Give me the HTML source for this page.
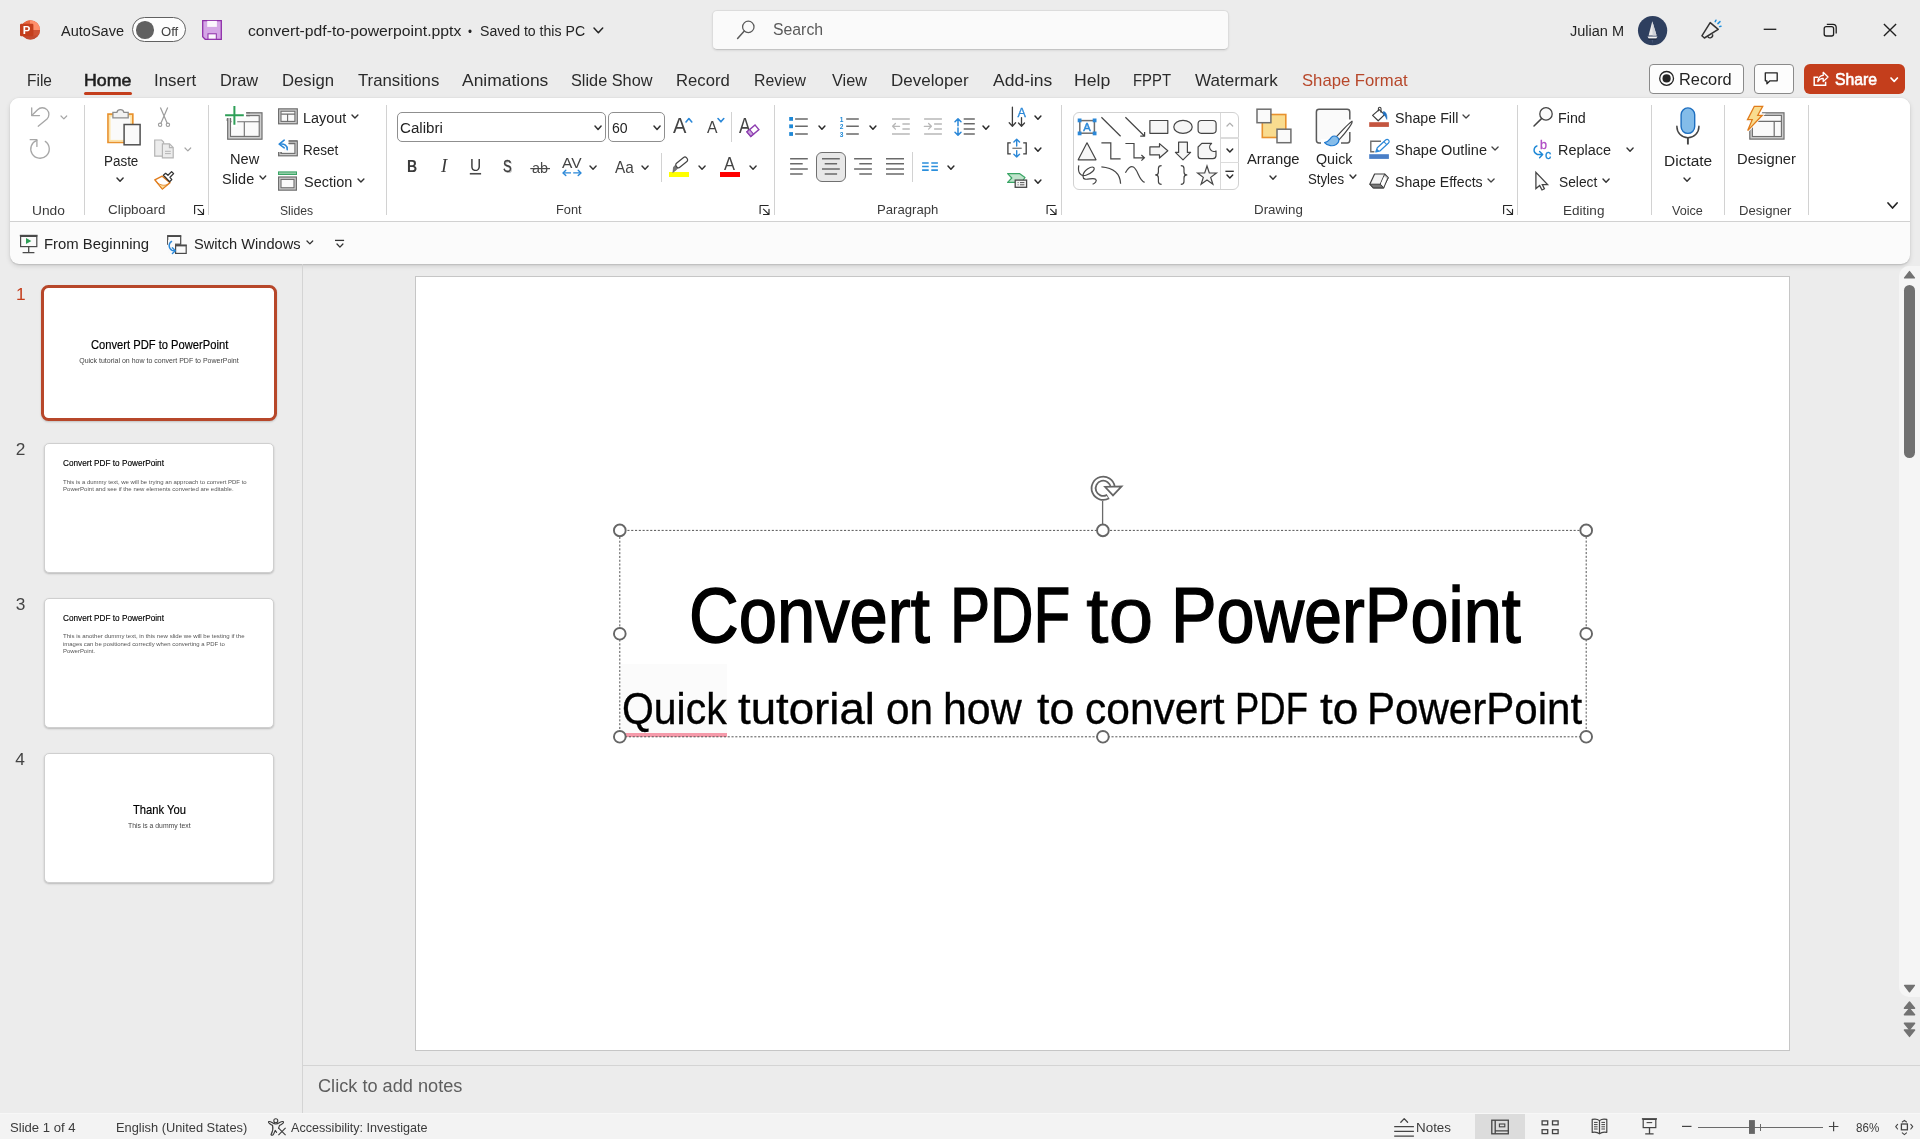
<!DOCTYPE html><html lang="en"><head><meta charset="utf-8"><title>convert-pdf-to-powerpoint.pptx - PowerPoint</title>
<style>html,body{margin:0;padding:0}body{width:1920px;height:1139px;overflow:hidden;position:relative;background:#ececec;font-family:"Liberation Sans", sans-serif}svg{display:block}span{transform-origin:0 50%}#app{position:absolute;left:0;top:0;width:1920px;height:1139px;will-change:transform}</style></head><body><div id="app">
<span style="position:absolute;left:61.30px;top:22.00px;font-size:15.5px;line-height:17px;white-space:pre;color:#242424;transform:scaleX(0.9370);transform-origin:0 50%;">AutoSave</span>
<div style="position:absolute;left:132px;top:17px;width:54px;height:25px;box-sizing:border-box;border:1px solid #616161;border-radius:13px;background:#fdfdfd"></div>
<div style="position:absolute;left:136.2px;top:21.2px;width:17.6px;height:17.6px;border-radius:50%;background:#616161"></div>
<span style="position:absolute;left:160.50px;top:24.00px;font-size:13.5px;line-height:15px;white-space:pre;color:#424242;transform:scaleX(0.9718);transform-origin:0 50%;">Off</span>
<span style="position:absolute;left:247.50px;top:22.00px;font-size:15.5px;line-height:17px;white-space:pre;color:#242424;transform:scaleX(1.0144);transform-origin:0 50%;">convert-pdf-to-powerpoint.pptx</span>
<span style="position:absolute;left:467.60px;top:24.00px;font-size:13px;line-height:15px;white-space:pre;color:#242424;transform:scaleX(0.8800);transform-origin:0 50%;">•</span>
<span style="position:absolute;left:479.50px;top:22.00px;font-size:15.5px;line-height:17px;white-space:pre;color:#242424;transform:scaleX(0.9102);transform-origin:0 50%;">Saved to this PC</span>
<svg style="position:absolute;left:592.55px;top:27.05px;overflow:visible" width="10.7" height="6.7"><path d="M1 1 L5.35 5.70 L9.70 1" fill="none" stroke="#242424" stroke-width="1.5" stroke-linecap="round" stroke-linejoin="round"/></svg>
<div style="position:absolute;left:711.5px;top:10.4px;width:517px;height:39.8px;box-sizing:border-box;background:#fafafa;border:1px solid #dcdcdc;border-bottom-color:#c4c4c4;border-radius:5px;box-shadow:0 1px 2px rgba(0,0,0,.08)"></div>
<span style="position:absolute;left:772.50px;top:20.00px;font-size:16.7px;line-height:19px;white-space:pre;color:#5a5a5a;transform:scaleX(0.9469);transform-origin:0 50%;">Search</span>
<span style="position:absolute;left:1570.00px;top:22.00px;font-size:15.5px;line-height:17px;white-space:pre;color:#242424;transform:scaleX(0.9365);transform-origin:0 50%;">Julian M</span>
<span style="position:absolute;left:26.57px;top:71.00px;font-size:16.6px;line-height:19px;white-space:pre;color:#2b2b2b;transform:scaleX(0.9330);transform-origin:0 50%;">File</span>
<span style="position:absolute;left:83.93px;top:71.00px;font-size:16.6px;line-height:19px;white-space:pre;color:#1f1f1f;transform:scaleX(1.0689);transform-origin:0 50%;-webkit-text-stroke:0.55px #1f1f1f;">Home</span>
<span style="position:absolute;left:153.68px;top:71.00px;font-size:16.6px;line-height:19px;white-space:pre;color:#2b2b2b;transform:scaleX(1.0174);transform-origin:0 50%;">Insert</span>
<span style="position:absolute;left:219.81px;top:71.00px;font-size:16.6px;line-height:19px;white-space:pre;color:#2b2b2b;transform:scaleX(0.9861);transform-origin:0 50%;">Draw</span>
<span style="position:absolute;left:282.29px;top:71.00px;font-size:16.6px;line-height:19px;white-space:pre;color:#2b2b2b;transform:scaleX(1.0055);transform-origin:0 50%;">Design</span>
<span style="position:absolute;left:358.00px;top:71.00px;font-size:16.6px;line-height:19px;white-space:pre;color:#2b2b2b;transform:scaleX(1.0095);transform-origin:0 50%;">Transitions</span>
<span style="position:absolute;left:462.00px;top:71.00px;font-size:16.6px;line-height:19px;white-space:pre;color:#2b2b2b;transform:scaleX(1.0515);transform-origin:0 50%;">Animations</span>
<span style="position:absolute;left:571.00px;top:71.00px;font-size:16.6px;line-height:19px;white-space:pre;color:#2b2b2b;transform:scaleX(0.9817);transform-origin:0 50%;">Slide Show</span>
<span style="position:absolute;left:676.00px;top:71.00px;font-size:16.6px;line-height:19px;white-space:pre;color:#2b2b2b;transform:scaleX(1.0045);transform-origin:0 50%;">Record</span>
<span style="position:absolute;left:754.04px;top:71.00px;font-size:16.6px;line-height:19px;white-space:pre;color:#2b2b2b;transform:scaleX(0.9555);transform-origin:0 50%;">Review</span>
<span style="position:absolute;left:832.00px;top:71.00px;font-size:16.6px;line-height:19px;white-space:pre;color:#2b2b2b;transform:scaleX(0.9814);transform-origin:0 50%;">View</span>
<span style="position:absolute;left:890.97px;top:71.00px;font-size:16.6px;line-height:19px;white-space:pre;color:#2b2b2b;transform:scaleX(1.0252);transform-origin:0 50%;">Developer</span>
<span style="position:absolute;left:993.00px;top:71.00px;font-size:16.6px;line-height:19px;white-space:pre;color:#2b2b2b;transform:scaleX(1.0542);transform-origin:0 50%;">Add-ins</span>
<span style="position:absolute;left:1073.94px;top:71.00px;font-size:16.6px;line-height:19px;white-space:pre;color:#2b2b2b;transform:scaleX(1.0639);transform-origin:0 50%;">Help</span>
<span style="position:absolute;left:1133.10px;top:71.00px;font-size:16.6px;line-height:19px;white-space:pre;color:#2b2b2b;transform:scaleX(0.8965);transform-origin:0 50%;">FPPT</span>
<span style="position:absolute;left:1195.00px;top:71.00px;font-size:16.6px;line-height:19px;white-space:pre;color:#2b2b2b;transform:scaleX(1.0281);transform-origin:0 50%;">Watermark</span>
<span style="position:absolute;left:1302.00px;top:71.00px;font-size:16.6px;line-height:19px;white-space:pre;color:#b7472a;transform:scaleX(1.0044);transform-origin:0 50%;">Shape Format</span>
<div style="position:absolute;left:84px;top:92px;width:48px;height:3px;background:#c43e1c;border-radius:1.5px"></div>
<div style="position:absolute;left:1649px;top:64px;width:95px;height:30px;box-sizing:border-box;background:#fdfdfd;border:1px solid #8a8a8a;border-radius:4px"></div>
<span style="position:absolute;left:1678.73px;top:70.00px;font-size:16.8px;line-height:19px;white-space:pre;color:#242424;transform:scaleX(0.9742);transform-origin:0 50%;">Record</span>
<div style="position:absolute;left:1754px;top:64px;width:40px;height:30px;box-sizing:border-box;background:#fdfdfd;border:1px solid #8a8a8a;border-radius:4px"></div>
<div style="position:absolute;left:1804px;top:64px;width:101px;height:30px;background:#c43e1c;border-radius:6px"></div>
<span style="position:absolute;left:1834.70px;top:70.00px;font-size:16.8px;line-height:19px;white-space:pre;color:#ffffff;transform:scaleX(0.9404);transform-origin:0 50%;-webkit-text-stroke:0.6px #fff;">Share</span>
<div style="position:absolute;left:10px;top:97.5px;width:1900px;height:166px;background:#fbfbfb;border-radius:9px;box-shadow:0 2px 5px rgba(0,0,0,.13),0 0.5px 1.5px rgba(0,0,0,.13)"></div>
<div style="position:absolute;left:10px;top:97.5px;width:1900px;height:124px;background:#ffffff;border-radius:9px 9px 0 0"></div>
<div style="position:absolute;left:10px;top:221px;width:1900px;height:1px;background:#d1d1d1"></div>
<div style="position:absolute;left:84px;top:104.5px;width:1px;height:110px;background:#d2d2d2"></div>
<div style="position:absolute;left:208px;top:104.5px;width:1px;height:110px;background:#d2d2d2"></div>
<div style="position:absolute;left:386px;top:104.5px;width:1px;height:110px;background:#d2d2d2"></div>
<div style="position:absolute;left:774px;top:104.5px;width:1px;height:110px;background:#d2d2d2"></div>
<div style="position:absolute;left:1061px;top:104.5px;width:1px;height:110px;background:#d2d2d2"></div>
<div style="position:absolute;left:1517px;top:104.5px;width:1px;height:110px;background:#d2d2d2"></div>
<div style="position:absolute;left:1651px;top:104.5px;width:1px;height:110px;background:#d2d2d2"></div>
<div style="position:absolute;left:1724px;top:104.5px;width:1px;height:110px;background:#d2d2d2"></div>
<div style="position:absolute;left:1808px;top:104.5px;width:1px;height:110px;background:#d2d2d2"></div>
<span style="position:absolute;left:31.96px;top:203.00px;font-size:13.3px;line-height:15px;white-space:pre;color:#3b3b3b;transform:scaleX(1.0364);transform-origin:0 50%;">Undo</span>
<span style="position:absolute;left:107.50px;top:202.00px;font-size:13.3px;line-height:15px;white-space:pre;color:#3b3b3b;transform:scaleX(1.0085);transform-origin:0 50%;">Clipboard</span>
<span style="position:absolute;left:280.00px;top:203.00px;font-size:13.3px;line-height:15px;white-space:pre;color:#3b3b3b;transform:scaleX(0.9161);transform-origin:0 50%;">Slides</span>
<span style="position:absolute;left:556.04px;top:202.00px;font-size:13.3px;line-height:15px;white-space:pre;color:#3b3b3b;transform:scaleX(0.9648);transform-origin:0 50%;">Font</span>
<span style="position:absolute;left:876.51px;top:202.00px;font-size:13.3px;line-height:15px;white-space:pre;color:#3b3b3b;transform:scaleX(0.9885);transform-origin:0 50%;">Paragraph</span>
<span style="position:absolute;left:1254.00px;top:202.00px;font-size:13.3px;line-height:15px;white-space:pre;color:#3b3b3b;transform:scaleX(1.0026);transform-origin:0 50%;">Drawing</span>
<span style="position:absolute;left:1562.98px;top:203.00px;font-size:13.3px;line-height:15px;white-space:pre;color:#3b3b3b;transform:scaleX(1.0188);transform-origin:0 50%;">Editing</span>
<span style="position:absolute;left:1672.00px;top:203.00px;font-size:13.3px;line-height:15px;white-space:pre;color:#3b3b3b;transform:scaleX(0.9492);transform-origin:0 50%;">Voice</span>
<span style="position:absolute;left:1739.01px;top:203.00px;font-size:13.3px;line-height:15px;white-space:pre;color:#3b3b3b;transform:scaleX(0.9851);transform-origin:0 50%;">Designer</span>
<span style="position:absolute;left:103.72px;top:152.00px;font-size:15.3px;line-height:17px;white-space:pre;color:#242424;transform:scaleX(0.8775);transform-origin:0 50%;">Paste</span>
<svg style="position:absolute;left:116.35px;top:176.80px;overflow:visible" width="8.1" height="5.2"><path d="M1 1 L4.05 4.20 L7.10 1" fill="none" stroke="#333" stroke-width="1.5" stroke-linecap="round" stroke-linejoin="round"/></svg>
<span style="position:absolute;left:229.74px;top:150.00px;font-size:15.3px;line-height:17px;white-space:pre;color:#242424;transform:scaleX(0.9557);transform-origin:0 50%;">New</span>
<span style="position:absolute;left:221.70px;top:170.00px;font-size:15.3px;line-height:17px;white-space:pre;color:#242424;transform:scaleX(0.9461);transform-origin:0 50%;">Slide</span>
<svg style="position:absolute;left:258.75px;top:174.85px;overflow:visible" width="7.699999999999999" height="5.1"><path d="M1 1 L3.85 4.10 L6.70 1" fill="none" stroke="#333" stroke-width="1.4" stroke-linecap="round" stroke-linejoin="round"/></svg>
<span style="position:absolute;left:302.86px;top:109.00px;font-size:15.3px;line-height:17px;white-space:pre;color:#242424;transform:scaleX(0.9392);transform-origin:0 50%;">Layout</span>
<svg style="position:absolute;left:351.35px;top:114.30px;overflow:visible" width="7.8999999999999995" height="5.0"><path d="M1 1 L3.95 4.00 L6.90 1" fill="none" stroke="#333" stroke-width="1.4" stroke-linecap="round" stroke-linejoin="round"/></svg>
<span style="position:absolute;left:302.92px;top:141.00px;font-size:15.3px;line-height:17px;white-space:pre;color:#242424;transform:scaleX(0.8839);transform-origin:0 50%;">Reset</span>
<span style="position:absolute;left:303.50px;top:173.00px;font-size:15.3px;line-height:17px;white-space:pre;color:#242424;transform:scaleX(0.9463);transform-origin:0 50%;">Section</span>
<svg style="position:absolute;left:356.55px;top:178.05px;overflow:visible" width="7.8999999999999995" height="5.1"><path d="M1 1 L3.95 4.10 L6.90 1" fill="none" stroke="#333" stroke-width="1.4" stroke-linecap="round" stroke-linejoin="round"/></svg>
<div style="position:absolute;left:397px;top:112px;width:208.5px;height:30px;box-sizing:border-box;background:#fff;border:1px solid #8f8f8f;border-radius:5px"></div>
<span style="position:absolute;left:400.00px;top:119.00px;font-size:15.3px;line-height:17px;white-space:pre;color:#242424;transform:scaleX(0.9895);transform-origin:0 50%;">Calibri</span>
<svg style="position:absolute;left:594.25px;top:124.65px;overflow:visible" width="8.1" height="5.5"><path d="M1 1 L4.05 4.50 L7.10 1" fill="none" stroke="#333" stroke-width="1.5" stroke-linecap="round" stroke-linejoin="round"/></svg>
<div style="position:absolute;left:608px;top:112px;width:57px;height:30px;box-sizing:border-box;background:#fff;border:1px solid #8f8f8f;border-radius:5px"></div>
<span style="position:absolute;left:611.60px;top:119.00px;font-size:15.3px;line-height:17px;white-space:pre;color:#242424;transform:scaleX(0.9208);transform-origin:0 50%;">60</span>
<svg style="position:absolute;left:653.25px;top:124.65px;overflow:visible" width="8.1" height="5.5"><path d="M1 1 L4.05 4.50 L7.10 1" fill="none" stroke="#333" stroke-width="1.5" stroke-linecap="round" stroke-linejoin="round"/></svg>
<div style="position:absolute;left:731px;top:112px;width:1px;height:30px;background:#d2d2d2"></div>
<div style="position:absolute;left:661px;top:152.5px;width:1px;height:29px;background:#d2d2d2"></div>
<div style="position:absolute;left:912px;top:152px;width:1px;height:30px;background:#d2d2d2"></div>
<span style="position:absolute;left:406.98px;top:156.00px;font-size:17.2px;line-height:20px;white-space:pre;color:#3b3b3b;font-weight:700;transform:scaleX(0.8182);transform-origin:0 50%;">B</span>
<span style="position:absolute;left:440.79px;top:156.00px;font-size:18px;line-height:20px;white-space:pre;color:#3b3b3b;font-family:'Liberation Serif', serif;font-style:italic;transform:scaleX(1.0375);transform-origin:0 50%;">I</span>
<span style="position:absolute;left:469.97px;top:156.00px;font-size:16.6px;line-height:19px;white-space:pre;color:#3b3b3b;transform:scaleX(0.9300);transform-origin:0 50%;">U</span>
<span style="position:absolute;left:503.10px;top:156.00px;font-size:17.4px;line-height:20px;white-space:pre;color:#3b3b3b;transform:scaleX(0.7455);transform-origin:0 50%;text-shadow:1.3px 1.2px 0 #c4c4c4;-webkit-text-stroke:0.3px #3b3b3b;">S</span>
<span style="position:absolute;left:532.00px;top:159.00px;font-size:15.2px;line-height:17px;white-space:pre;color:#4a4a4a;transform:scaleX(0.9485);transform-origin:0 50%;">ab</span>
<span style="position:absolute;left:562.20px;top:155.00px;font-size:14.8px;line-height:16px;white-space:pre;color:#444;transform:scaleX(1.0495);transform-origin:0 50%;">AV</span>
<svg style="position:absolute;left:589.25px;top:164.95px;overflow:visible" width="8.1" height="5.3"><path d="M1 1 L4.05 4.30 L7.10 1" fill="none" stroke="#333" stroke-width="1.4" stroke-linecap="round" stroke-linejoin="round"/></svg>
<span style="position:absolute;left:614.50px;top:158.00px;font-size:16.6px;line-height:19px;white-space:pre;color:#444;transform:scaleX(0.9256);transform-origin:0 50%;">Aa</span>
<svg style="position:absolute;left:641.45px;top:165.10px;overflow:visible" width="8.1" height="5.2"><path d="M1 1 L4.05 4.20 L7.10 1" fill="none" stroke="#333" stroke-width="1.4" stroke-linecap="round" stroke-linejoin="round"/></svg>
<svg style="position:absolute;left:698.25px;top:165.05px;overflow:visible" width="8.1" height="5.3"><path d="M1 1 L4.05 4.30 L7.10 1" fill="none" stroke="#333" stroke-width="1.4" stroke-linecap="round" stroke-linejoin="round"/></svg>
<svg style="position:absolute;left:749.05px;top:165.05px;overflow:visible" width="8.1" height="5.3"><path d="M1 1 L4.05 4.30 L7.10 1" fill="none" stroke="#333" stroke-width="1.4" stroke-linecap="round" stroke-linejoin="round"/></svg>
<div style="position:absolute;left:669px;top:172px;width:20px;height:5px;background:#ffff00"></div>
<div style="position:absolute;left:720px;top:172px;width:20px;height:5px;background:#ff0000"></div>
<span style="position:absolute;left:724.30px;top:153.00px;font-size:18.3px;line-height:21px;white-space:pre;color:#444;transform:scaleX(0.9000);transform-origin:0 50%;">A</span>
<div style="position:absolute;left:816px;top:152px;width:30px;height:30px;box-sizing:border-box;background:#e8e8e8;border:1px solid #707070;border-radius:6px"></div>
<div style="position:absolute;left:1073px;top:112px;width:166px;height:78px;box-sizing:border-box;background:#fff;border:1px solid #d1d1d1;border-radius:6px"></div>
<div style="position:absolute;left:1220px;top:113px;width:1px;height:76px;background:#d9d9d9"></div>
<div style="position:absolute;left:1221px;top:137px;width:17.5px;height:1.5px;background:#dcdcdc"></div>
<div style="position:absolute;left:1221px;top:161.5px;width:17.5px;height:1.5px;background:#dcdcdc"></div>
<span style="position:absolute;left:1247.40px;top:150.00px;font-size:15.3px;line-height:17px;white-space:pre;color:#242424;transform:scaleX(0.9664);transform-origin:0 50%;">Arrange</span>
<svg style="position:absolute;left:1269.40px;top:174.70px;overflow:visible" width="8.0" height="5.2"><path d="M1 1 L4.00 4.20 L7.00 1" fill="none" stroke="#333" stroke-width="1.4" stroke-linecap="round" stroke-linejoin="round"/></svg>
<span style="position:absolute;left:1315.60px;top:150.00px;font-size:15.3px;line-height:17px;white-space:pre;color:#242424;transform:scaleX(0.9328);transform-origin:0 50%;">Quick</span>
<span style="position:absolute;left:1308.00px;top:170.00px;font-size:15.3px;line-height:17px;white-space:pre;color:#242424;transform:scaleX(0.8641);transform-origin:0 50%;">Styles</span>
<svg style="position:absolute;left:1349.45px;top:174.30px;overflow:visible" width="7.8999999999999995" height="5.2"><path d="M1 1 L3.95 4.20 L6.90 1" fill="none" stroke="#333" stroke-width="1.4" stroke-linecap="round" stroke-linejoin="round"/></svg>
<span style="position:absolute;left:1394.50px;top:109.00px;font-size:15.3px;line-height:17px;white-space:pre;color:#242424;transform:scaleX(0.9316);transform-origin:0 50%;">Shape Fill</span>
<svg style="position:absolute;left:1462.45px;top:114.00px;overflow:visible" width="8.1" height="5.0"><path d="M1 1 L4.05 4.00 L7.10 1" fill="none" stroke="#424242" stroke-width="1.3" stroke-linecap="round" stroke-linejoin="round"/></svg>
<span style="position:absolute;left:1394.50px;top:141.00px;font-size:15.3px;line-height:17px;white-space:pre;color:#242424;transform:scaleX(0.9488);transform-origin:0 50%;">Shape Outline</span>
<svg style="position:absolute;left:1491.45px;top:146.00px;overflow:visible" width="8.1" height="5.0"><path d="M1 1 L4.05 4.00 L7.10 1" fill="none" stroke="#424242" stroke-width="1.3" stroke-linecap="round" stroke-linejoin="round"/></svg>
<span style="position:absolute;left:1394.50px;top:173.00px;font-size:15.3px;line-height:17px;white-space:pre;color:#242424;transform:scaleX(0.9233);transform-origin:0 50%;">Shape Effects</span>
<svg style="position:absolute;left:1487.45px;top:178.00px;overflow:visible" width="8.1" height="5.0"><path d="M1 1 L4.05 4.00 L7.10 1" fill="none" stroke="#424242" stroke-width="1.3" stroke-linecap="round" stroke-linejoin="round"/></svg>
<span style="position:absolute;left:1557.87px;top:109.00px;font-size:15.3px;line-height:17px;white-space:pre;color:#242424;transform:scaleX(0.9345);transform-origin:0 50%;">Find</span>
<span style="position:absolute;left:1557.86px;top:141.00px;font-size:15.3px;line-height:17px;white-space:pre;color:#242424;transform:scaleX(0.9429);transform-origin:0 50%;">Replace</span>
<svg style="position:absolute;left:1626.45px;top:146.90px;overflow:visible" width="8.1" height="5.2"><path d="M1 1 L4.05 4.20 L7.10 1" fill="none" stroke="#333" stroke-width="1.4" stroke-linecap="round" stroke-linejoin="round"/></svg>
<span style="position:absolute;left:1558.80px;top:173.00px;font-size:15.3px;line-height:17px;white-space:pre;color:#242424;transform:scaleX(0.8991);transform-origin:0 50%;">Select</span>
<svg style="position:absolute;left:1602.35px;top:177.80px;overflow:visible" width="8.1" height="5.2"><path d="M1 1 L4.05 4.20 L7.10 1" fill="none" stroke="#333" stroke-width="1.4" stroke-linecap="round" stroke-linejoin="round"/></svg>
<span style="position:absolute;left:1663.99px;top:152.00px;font-size:15.3px;line-height:17px;white-space:pre;color:#242424;transform:scaleX(1.0130);transform-origin:0 50%;">Dictate</span>
<svg style="position:absolute;left:1683.35px;top:176.75px;overflow:visible" width="8.1" height="5.3"><path d="M1 1 L4.05 4.30 L7.10 1" fill="none" stroke="#333" stroke-width="1.4" stroke-linecap="round" stroke-linejoin="round"/></svg>
<span style="position:absolute;left:1736.94px;top:150.00px;font-size:15.3px;line-height:17px;white-space:pre;color:#242424;transform:scaleX(0.9630);transform-origin:0 50%;">Designer</span>
<svg style="position:absolute;left:1886.95px;top:201.80px;overflow:visible" width="11.1" height="7.0"><path d="M1 1 L5.55 6.00 L10.10 1" fill="none" stroke="#242424" stroke-width="1.7" stroke-linecap="round" stroke-linejoin="round"/></svg>
<span style="position:absolute;left:43.63px;top:235.00px;font-size:15.3px;line-height:17px;white-space:pre;color:#242424;transform:scaleX(0.9730);transform-origin:0 50%;">From Beginning</span>
<span style="position:absolute;left:193.70px;top:235.00px;font-size:15.3px;line-height:17px;white-space:pre;color:#242424;transform:scaleX(0.9578);transform-origin:0 50%;">Switch Windows</span>
<svg style="position:absolute;left:305.55px;top:239.95px;overflow:visible" width="7.699999999999999" height="4.9"><path d="M1 1 L3.85 3.90 L6.70 1" fill="none" stroke="#333" stroke-width="1.3" stroke-linecap="round" stroke-linejoin="round"/></svg>
<div style="position:absolute;left:302px;top:264px;width:1px;height:849px;background:#d4d4d4"></div>
<span style="position:absolute;left:16.00px;top:284.00px;font-size:17.3px;line-height:20px;white-space:pre;color:#c43e1c;">1</span>
<span style="position:absolute;left:15.70px;top:439.00px;font-size:17.3px;line-height:20px;white-space:pre;color:#444;">2</span>
<span style="position:absolute;left:15.70px;top:594.00px;font-size:17.3px;line-height:20px;white-space:pre;color:#444;">3</span>
<span style="position:absolute;left:15.20px;top:749.00px;font-size:17.3px;line-height:20px;white-space:pre;color:#444;">4</span>
<div style="position:absolute;left:41.2px;top:284.9px;width:235.8px;height:136px;box-sizing:border-box;background:#fff;border:3px solid #b7472a;border-radius:7.5px;box-shadow:0 1px 2px rgba(0,0,0,.18)"></div>
<div style="position:absolute;left:44px;top:443px;width:230px;height:130px;box-sizing:border-box;background:#fff;border:1px solid #cfcfcf;border-radius:5px;box-shadow:0 1px 2px rgba(0,0,0,.22)"></div>
<div style="position:absolute;left:44px;top:598px;width:230px;height:130px;box-sizing:border-box;background:#fff;border:1px solid #cfcfcf;border-radius:5px;box-shadow:0 1px 2px rgba(0,0,0,.22)"></div>
<div style="position:absolute;left:44px;top:753px;width:230px;height:130px;box-sizing:border-box;background:#fff;border:1px solid #cfcfcf;border-radius:5px;box-shadow:0 1px 2px rgba(0,0,0,.22)"></div>
<span style="position:absolute;left:90.50px;top:337.00px;font-size:13px;line-height:15px;white-space:pre;color:#000;transform:scaleX(0.8597);transform-origin:0 50%;-webkit-text-stroke:0.2px #000;">Convert PDF to PowerPoint</span>
<span style="position:absolute;left:79.20px;top:357.00px;font-size:7px;line-height:7px;white-space:pre;color:#444;">Quick tutorial on how to convert PDF to PowerPoint</span>
<span style="position:absolute;left:62.50px;top:458.00px;font-size:8.6px;line-height:10px;white-space:pre;color:#000;transform:scaleX(0.9560);transform-origin:0 50%;-webkit-text-stroke:0.15px #000;">Convert PDF to PowerPoint</span>
<span style="position:absolute;left:62.50px;top:479.00px;font-size:5.9px;line-height:6px;white-space:pre;color:#555;transform:scaleX(1.0163);transform-origin:0 50%;">This is a dummy text, we will be trying an approach to convert PDF to</span>
<span style="position:absolute;left:62.50px;top:486.00px;font-size:5.9px;line-height:6px;white-space:pre;color:#555;transform:scaleX(1.0237);transform-origin:0 50%;">PowerPoint and see if the new elements converted are editable.</span>
<span style="position:absolute;left:62.50px;top:613.00px;font-size:8.6px;line-height:10px;white-space:pre;color:#000;transform:scaleX(0.9560);transform-origin:0 50%;-webkit-text-stroke:0.15px #000;">Convert PDF to PowerPoint</span>
<span style="position:absolute;left:62.50px;top:633.00px;font-size:5.9px;line-height:6px;white-space:pre;color:#555;transform:scaleX(1.0307);transform-origin:0 50%;">This is another dummy text, in this new slide we will be testing if the</span>
<span style="position:absolute;left:62.50px;top:641.00px;font-size:5.9px;line-height:6px;white-space:pre;color:#555;transform:scaleX(1.0103);transform-origin:0 50%;">images can be positioned correctly when converting a PDF to</span>
<span style="position:absolute;left:62.50px;top:648.00px;font-size:5.9px;line-height:6px;white-space:pre;color:#555;transform:scaleX(1.0117);transform-origin:0 50%;">PowerPoint.</span>
<span style="position:absolute;left:132.80px;top:802.00px;font-size:13px;line-height:15px;white-space:pre;color:#000;transform:scaleX(0.8609);transform-origin:0 50%;-webkit-text-stroke:0.2px #000;">Thank You</span>
<span style="position:absolute;left:127.80px;top:822.00px;font-size:7px;line-height:7px;white-space:pre;color:#444;transform:scaleX(0.9745);transform-origin:0 50%;">This is a dummy text</span>
<div style="position:absolute;left:415px;top:276px;width:1374.5px;height:775px;box-sizing:border-box;background:#fff;border:1px solid #c6c6c6"></div>
<div style="position:absolute;left:303px;top:1065px;width:1617px;height:1px;background:#d4d4d4"></div>
<span style="position:absolute;left:317.70px;top:1075.00px;font-size:18.3px;line-height:21px;white-space:pre;color:#5e5e5e;transform:scaleX(0.9940);transform-origin:0 50%;">Click to add notes</span>
<div style="position:absolute;left:0px;top:1113px;width:1920px;height:26px;background:#f3f3f3;border-top:1px solid #f7f7f7;box-sizing:border-box"></div>
<span style="position:absolute;left:10.30px;top:1120.00px;font-size:12.8px;line-height:15px;white-space:pre;color:#3b3b3b;transform:scaleX(1.0249);transform-origin:0 50%;">Slide 1 of 4</span>
<span style="position:absolute;left:116.00px;top:1120.00px;font-size:12.8px;line-height:15px;white-space:pre;color:#3b3b3b;transform:scaleX(1.0030);transform-origin:0 50%;">English (United States)</span>
<span style="position:absolute;left:290.80px;top:1120.00px;font-size:12.8px;line-height:15px;white-space:pre;color:#3b3b3b;transform:scaleX(0.9843);transform-origin:0 50%;">Accessibility: Investigate</span>
<span style="position:absolute;left:1415.86px;top:1120.00px;font-size:12.9px;line-height:15px;white-space:pre;color:#3b3b3b;transform:scaleX(1.0394);transform-origin:0 50%;">Notes</span>
<span style="position:absolute;left:1855.50px;top:1121.00px;font-size:12px;line-height:14px;white-space:pre;color:#3b3b3b;transform:scaleX(0.9652);transform-origin:0 50%;">86%</span>
<div style="position:absolute;left:1475px;top:1114px;width:50px;height:25px;background:#dcdcdc"></div>
<div style="position:absolute;left:1899px;top:265.5px;width:21px;height:731.5px;background:#f5f5f5;border-radius:10px 0 0 10px"></div>
<div style="position:absolute;left:1904px;top:285px;width:11px;height:173px;background:#707070;border-radius:5.5px"></div>
<div style="position:absolute;left:621px;top:664px;width:106px;height:72.5px;background:#fbfbfb"></div>
<div style="position:absolute;left:621px;top:733.3px;width:105.8px;height:3.4px;background:#f59aaa"></div>
<svg style="position:absolute;left:600px;top:470px;overflow:visible" width="1000" height="290" viewBox="0 0 1000 290" ><rect x="19.8" y="60.4" width="966.4" height="206.4" fill="none" stroke="#555" stroke-width="1" stroke-dasharray="2.1 1.7"/><line x1="502.6" y1="31" x2="502.6" y2="55" stroke="#6a6a6a" stroke-width="1.3"/><circle cx="19.8" cy="60.4" r="5.85" fill="#fff" stroke="#666" stroke-width="1.9"/><circle cx="19.8" cy="163.8" r="5.85" fill="#fff" stroke="#666" stroke-width="1.9"/><circle cx="19.8" cy="266.8" r="5.85" fill="#fff" stroke="#666" stroke-width="1.9"/><circle cx="502.9" cy="60.4" r="5.85" fill="#fff" stroke="#666" stroke-width="1.9"/><circle cx="502.9" cy="266.8" r="5.85" fill="#fff" stroke="#666" stroke-width="1.9"/><circle cx="986.2" cy="60.4" r="5.85" fill="#fff" stroke="#666" stroke-width="1.9"/><circle cx="986.2" cy="163.8" r="5.85" fill="#fff" stroke="#666" stroke-width="1.9"/><circle cx="986.2" cy="266.8" r="5.85" fill="#fff" stroke="#666" stroke-width="1.9"/><path d="M508.14 26.53 A9.6 9.6 0 1 1 512.71 16.96" fill="none" stroke="#656565" stroke-width="5.8"/><path d="M507.4 26.95 A9.6 9.6 0 1 1 512.75 17.3" fill="none" stroke="#fff" stroke-width="2.3"/><path d="M505 16.9 L521.6 16.4 L513 25.4 Z" fill="#fff" stroke="#656565" stroke-width="1.7" stroke-linejoin="miter"/></svg>
<span style="position:absolute;left:689.42px;top:572.00px;font-size:77px;line-height:86px;white-space:pre;color:#000;transform:scaleX(0.8932);transform-origin:0 50%;-webkit-text-stroke:1.5px #000;">Convert </span>
<span style="position:absolute;left:950.11px;top:572.00px;font-size:77px;line-height:86px;white-space:pre;color:#000;transform:scaleX(0.7809);transform-origin:0 50%;-webkit-text-stroke:1.5px #000;">PDF </span>
<span style="position:absolute;left:1086.45px;top:572.00px;font-size:77px;line-height:86px;white-space:pre;color:#000;transform:scaleX(1.0498);transform-origin:0 50%;-webkit-text-stroke:0.8px #000;">to </span>
<span style="position:absolute;left:1170.77px;top:572.00px;font-size:77px;line-height:86px;white-space:pre;color:#000;transform:scaleX(0.8880);transform-origin:0 50%;-webkit-text-stroke:1.5px #000;">PowerPoint</span>
<span style="position:absolute;left:621.92px;top:685.00px;font-size:43.5px;line-height:48px;white-space:pre;color:#000;transform:scaleX(0.9411);transform-origin:0 50%;-webkit-text-stroke:0.35px #000;">Quick </span>
<span style="position:absolute;left:738.10px;top:685.00px;font-size:43.5px;line-height:48px;white-space:pre;color:#000;transform:scaleX(1.0485);transform-origin:0 50%;-webkit-text-stroke:0.35px #000;">tutorial </span>
<span style="position:absolute;left:886.13px;top:685.00px;font-size:43.5px;line-height:48px;white-space:pre;color:#000;transform:scaleX(0.9714);transform-origin:0 50%;-webkit-text-stroke:0.35px #000;">on </span>
<span style="position:absolute;left:943.24px;top:685.00px;font-size:43.5px;line-height:48px;white-space:pre;color:#000;transform:scaleX(0.9860);transform-origin:0 50%;-webkit-text-stroke:0.35px #000;">how </span>
<span style="position:absolute;left:1036.60px;top:685.00px;font-size:43.5px;line-height:48px;white-space:pre;color:#000;transform:scaleX(1.0261);transform-origin:0 50%;-webkit-text-stroke:0.35px #000;">to </span>
<span style="position:absolute;left:1085.22px;top:685.00px;font-size:43.5px;line-height:48px;white-space:pre;color:#000;transform:scaleX(0.9777);transform-origin:0 50%;-webkit-text-stroke:0.35px #000;">convert </span>
<span style="position:absolute;left:1235.09px;top:685.00px;font-size:43.5px;line-height:48px;white-space:pre;color:#000;transform:scaleX(0.8383);transform-origin:0 50%;-webkit-text-stroke:0.35px #000;">PDF </span>
<span style="position:absolute;left:1319.70px;top:685.00px;font-size:43.5px;line-height:48px;white-space:pre;color:#000;transform:scaleX(1.0574);transform-origin:0 50%;-webkit-text-stroke:0.35px #000;">to </span>
<span style="position:absolute;left:1367.40px;top:685.00px;font-size:43.5px;line-height:48px;white-space:pre;color:#000;transform:scaleX(0.9669);transform-origin:0 50%;-webkit-text-stroke:0.35px #000;">PowerPoint</span>
<svg style="position:absolute;left:19px;top:19px;overflow:visible" width="23" height="23" viewBox="0 0 23 23" ><defs><clipPath id="lc"><circle cx="11.4" cy="10.9" r="9.6"/></clipPath></defs><g clip-path="url(#lc)"><rect x="0" y="0" width="23" height="23" fill="#d35230"/><path d="M10.7 0 H23 V11 H10.7 Z" fill="#ff8f6b"/><path d="M10.7 0 V11 H0 V0 Z" fill="#e8673f"/><path d="M0 11 H23 V16.5 H0Z" fill="#cf5334"/><path d="M0 16.5 H23 V23 H0Z" fill="#c24a30"/></g><rect x="1" y="4.8" width="13.4" height="12.4" rx="1.2" fill="#c43e1c"/><text x="7.5" y="15.1" text-anchor="middle" font-family="Liberation Sans, sans-serif" font-weight="700" font-size="11.4" fill="#fff">P</text></svg>
<svg style="position:absolute;left:202px;top:20px;overflow:visible" width="20" height="20" viewBox="0 0 20 20" ><path d="M0.7 0.7 H19.3 V19.3 H3.2 L0.7 16.8 Z" fill="#d5a6e6" stroke="#8e2fa8" stroke-width="1.3" stroke-linejoin="miter"/><rect x="5.2" y="0.9" width="9.7" height="6" fill="#fbf6fd"/><rect x="6" y="13.8" width="8.3" height="5.4" fill="#fbf6fd" stroke="#8e2fa8" stroke-width="1"/></svg>
<svg style="position:absolute;left:735px;top:18px;overflow:visible" width="24" height="24" viewBox="0 0 24 24" ><circle cx="13.3" cy="8.9" r="5.7" fill="none" stroke="#5a5a5a" stroke-width="1.25"/><path d="M9.3 13 L2.6 20.5" stroke="#5a5a5a" stroke-width="1.5" stroke-linecap="round"/></svg>
<svg style="position:absolute;left:1637.9px;top:15.5px;overflow:visible" width="29.2" height="29.2" viewBox="0 0 29.2 29.2" ><circle cx="14.6" cy="14.6" r="14.65" fill="#2e3f5f"/><path d="M14.3 5.2 L10.6 19.6 H18.6 Z" fill="#e9e9ea"/><path d="M14.3 5.2 L14.6 19.6 H18.6 Z" fill="#cfd2d8"/><path d="M9.5 20.6 H19.5 L18.3 22.6 H10.7 Z" fill="#f4f4f4"/><path d="M10 22.7 H19 L18.4 23.4 H10.6Z" fill="#141c2e"/><path d="M13.6 24 L14.4 27.5 L15.2 24Z" fill="#55648a" opacity=".6"/></svg>
<svg style="position:absolute;left:1700px;top:19px;overflow:visible" width="23" height="22" viewBox="0 0 23 22" ><path d="M1.9 16.8 L10.2 3.6 L18.2 10.4 L4.4 19 Z" fill="none" stroke="#333" stroke-width="1.5" stroke-linejoin="round"/><path d="M7.6 17.2 A2.6 2.6 0 0 0 12.4 15.2" fill="none" stroke="#333" stroke-width="1.4" /><path d="M15.2 2.6 L16 1.2 M17.9 4.6 L20 2.6 M19.6 7.6 L21 7.2" fill="none" stroke="#1e8fdc" stroke-width="1.5" stroke-linecap="round"/></svg>
<svg style="position:absolute;left:1760px;top:20px;overflow:visible" width="20" height="20" viewBox="0 0 20 20" ><path d="M3.7 9.3 H16.3" stroke="#1f1f1f" stroke-width="1.3"/></svg>
<svg style="position:absolute;left:1820px;top:20px;overflow:visible" width="20" height="20" viewBox="0 0 20 20" ><rect x="4.2" y="6.6" width="9.4" height="9.4" rx="2" fill="none" stroke="#1f1f1f" stroke-width="1.3"/><path d="M6.8 4.4 H13 A3.2 3.2 0 0 1 16.2 7.6 V13.6" fill="none" stroke="#1f1f1f" stroke-width="1.3"/></svg>
<svg style="position:absolute;left:1880px;top:20px;overflow:visible" width="20" height="20" viewBox="0 0 20 20" ><path d="M3.9 3.9 L16.1 16.1 M16.1 3.9 L3.9 16.1" stroke="#1f1f1f" stroke-width="1.35"/></svg>
<svg style="position:absolute;left:1658px;top:70px;overflow:visible" width="17" height="17" viewBox="0 0 17 17" ><circle cx="8.6" cy="8.4" r="6.9" fill="none" stroke="#242424" stroke-width="1.3"/><circle cx="8.6" cy="8.4" r="4.1" fill="#242424"/></svg>
<svg style="position:absolute;left:1764px;top:71px;overflow:visible" width="15" height="15" viewBox="0 0 15 15" ><path d="M1.3 1.8 H13.2 V9.8 H6 L2.9 12.8 V9.8 H1.3 Z" fill="none" stroke="#242424" stroke-width="1.3" stroke-linejoin="round"/></svg>
<svg style="position:absolute;left:1813px;top:71px;overflow:visible" width="16" height="16" viewBox="0 0 16 16" ><path d="M5.2 6.2 H1.2 V14.2 H12.6 V10.8" fill="none" stroke="#fff" stroke-width="1.5" stroke-linejoin="miter"/><path d="M4.8 10.6 C5.2 6.8 7.6 4.6 10.2 4.4 V1.3 L15 6 L10.2 10.6 V7.4 C8 7.3 6.2 8.2 4.8 10.6 Z" fill="none" stroke="#fff" stroke-width="1.3" stroke-linejoin="round"/></svg>
<svg style="position:absolute;left:1890.30px;top:77.00px;overflow:visible" width="8.399999999999999" height="5.4"><path d="M1 1 L4.20 4.40 L7.40 1" fill="none" stroke="#fff" stroke-width="1.7" stroke-linecap="round" stroke-linejoin="round"/></svg>
<svg style="position:absolute;left:0;top:0;overflow:visible" width="1920" height="300" viewBox="0 0 1920 300"><path d="M31.7 107.8 V115.6 H39.5" fill="none" stroke="#a6a6a6" stroke-width="1.3" stroke-linecap="round" stroke-linejoin="round"/><path d="M32 115.3 L37.6 109.7 A6.6 6.6 0 0 1 47 119 L38.2 126.2" fill="none" stroke="#a6a6a6" stroke-width="1.3" stroke-linecap="round"/><path d="M45.3 141.4 A9.25 9.25 0 1 1 36.84 140.3" fill="none" stroke="#a6a6a6" stroke-width="1.3" stroke-linecap="round"/><path d="M30.2 139.7 H36.9 V146.4" fill="none" stroke="#a6a6a6" stroke-width="1.3" stroke-linecap="round" stroke-linejoin="round"/></svg>
<svg style="position:absolute;left:59.65px;top:115.05px;overflow:visible" width="7.699999999999999" height="4.9"><path d="M1 1 L3.85 3.90 L6.70 1" fill="none" stroke="#a6a6a6" stroke-width="1.2" stroke-linecap="round" stroke-linejoin="round"/></svg>
<svg style="position:absolute;left:0;top:0;overflow:visible" width="1920" height="300" viewBox="0 0 1920 300"><rect x="108" y="114.1" width="24.8" height="28.3" fill="#fafafa" stroke="#e8912d" stroke-width="1.7"/><rect x="109.7" y="115.8" width="21.4" height="24.9" fill="none" stroke="#fde3a5" stroke-width="1.6"/><path d="M112.9 117.8 V112.4 H116.9 A3.6 3.6 0 0 1 123.9 112.4 H128.2 V117.8 Z" fill="#f2f2f2" stroke="#8c8c8c" stroke-width="1.3"/><rect x="124.1" y="124.5" width="16" height="20.3" fill="#fafafa" stroke="#505050" stroke-width="1.5"/></svg>
<svg style="position:absolute;left:0;top:0;overflow:visible" width="1920" height="300" viewBox="0 0 1920 300"><path d="M160.4 107.4 L167.2 123.2 M167.7 107.4 L160.9 123.2" fill="none" stroke="#9c9c9c" stroke-width="1.2" /><circle cx="160.1" cy="124.8" r="1.7" fill="none" stroke="#9c9c9c" stroke-width="1.1"/><circle cx="167.9" cy="124.8" r="1.7" fill="none" stroke="#9c9c9c" stroke-width="1.1"/></svg>
<svg style="position:absolute;left:0;top:0;overflow:visible" width="1920" height="300" viewBox="0 0 1920 300"><path d="M154.7 140 H161.6 L163.6 142 V156.2 H154.7 Z" fill="#ececec" stroke="#b4b4b4" stroke-width="1.2"/><path d="M162.4 143.8 H169.6 L173.2 147.4 V157.9 H162.4 Z" fill="#ececec" stroke="#b4b4b4" stroke-width="1.2"/><path d="M169.4 144 V147.6 H173" fill="none" stroke="#b4b4b4" stroke-width="1.1"/><path d="M165 151.3 H170.8 M165 153.6 H170.8" stroke="#b4b4b4" stroke-width="1"/></svg>
<svg style="position:absolute;left:183.55px;top:146.85px;overflow:visible" width="7.699999999999999" height="4.9"><path d="M1 1 L3.85 3.90 L6.70 1" fill="none" stroke="#a6a6a6" stroke-width="1.2" stroke-linecap="round" stroke-linejoin="round"/></svg>
<svg style="position:absolute;left:0;top:0;overflow:visible" width="1920" height="300" viewBox="0 0 1920 300"><path d="M154.8 179.8 L162.2 176.2 L170 182.6 L162.4 189 Z" fill="#fff" stroke="#e07b1a" stroke-width="1.4" stroke-linejoin="round"/><path d="M157.5 183 L162.4 188.8 L167.5 184.5 C164 186 160.5 185 157.5 183 Z" fill="#fbdc9a" stroke="#e07b1a" stroke-width="0.8"/><path d="M163.4 175.2 L165.6 173.3 L168 175.2 L171.6 171.6 L173.6 173.6 L170 177.3 L171.8 179.6 L169.6 181.8 Z" fill="#fff" stroke="#333" stroke-width="1.3" stroke-linejoin="round"/></svg>
<svg style="position:absolute;left:0;top:0;overflow:visible" width="1920" height="300" viewBox="0 0 1920 300"><rect x="227.7" y="112.8" width="34.300000000000026" height="26.40000000000001" fill="#cdcdcd" stroke="#6e6e6e" stroke-width="1.2"/><rect x="230.5" y="115.60000000000001" width="28.700000000000028" height="20.800000000000008" fill="#fafafa" stroke="#6e6e6e" stroke-width="1.1"/><path d="M230.7 121.8 H259.5 M244.3 121.8 V136.6" fill="none" stroke="#6e6e6e" stroke-width="1.1" /><path d="M223 104 H246.2 V118 H237.2 V127 H231.6 V118 H223 Z" fill="#fff"/><path d="M227.2 118.5 V121 M230.6 118.5 V122" fill="none" stroke="#6e6e6e" stroke-width="1.1" /><path d="M246.2 112.8 H250 M246.2 115.6 H250" fill="none" stroke="#6e6e6e" stroke-width="1.1" /><path d="M234.4 106.1 V124.8 M225.1 115.3 H243.8" fill="none" stroke="#2e9f57" stroke-width="2" /></svg>
<svg style="position:absolute;left:0;top:0;overflow:visible" width="1920" height="300" viewBox="0 0 1920 300"><rect x="278.6" y="108.85" width="18.699999999999978" height="14.950000000000006" fill="#cdcdcd" stroke="#6e6e6e" stroke-width="1.2"/><rect x="281" y="111.25" width="13.899999999999977" height="10.150000000000006" fill="#fafafa" stroke="#6e6e6e" stroke-width="1.1"/><path d="M281.2 114.1 H295 M287.6 114.1 V121.4" fill="none" stroke="#6e6e6e" stroke-width="1.1" /></svg>
<svg style="position:absolute;left:0;top:0;overflow:visible" width="1920" height="300" viewBox="0 0 1920 300"><rect x="278.6" y="140.9" width="18.699999999999978" height="14.899999999999995" fill="#cdcdcd" stroke="#6e6e6e" stroke-width="1.2"/><rect x="281" y="143.3" width="13.899999999999977" height="10.099999999999994" fill="#fafafa" stroke="#6e6e6e" stroke-width="1.1"/><path d="M276 138 H288.6 V146.2 H284 V152 H276 Z" fill="#fff"/><path d="M288.6 143.6 H294.8 M288.6 141 H297" fill="none" stroke="#6e6e6e" stroke-width="1.1" /><path d="M281.2 152 V153.2 M278.6 152 V155.8" fill="none" stroke="#6e6e6e" stroke-width="1.1" /><path d="M284.2 140.2 L279.2 144.2 L284.2 147.8" fill="none" stroke="#2b88d8" stroke-width="1.6" stroke-linecap="round" stroke-linejoin="round"/><path d="M279.8 144.1 C284.5 143.6 287.6 145.6 287.2 149.6" fill="none" stroke="#2b88d8" stroke-width="1.6" stroke-linecap="round"/></svg>
<svg style="position:absolute;left:0;top:0;overflow:visible" width="1920" height="300" viewBox="0 0 1920 300"><rect x="278.5" y="171.9" width="18" height="2.6" fill="#8fcca5" stroke="#3aa565" stroke-width="1"/><rect x="278.6" y="177.0" width="17.8" height="13.149999999999995" fill="#cdcdcd" stroke="#6e6e6e" stroke-width="1.2"/><rect x="281" y="179.4" width="13" height="8.349999999999994" fill="#fafafa" stroke="#6e6e6e" stroke-width="1.1"/></svg>
<span style="position:absolute;left:673.10px;top:113.00px;font-size:22px;line-height:25px;white-space:pre;color:#444;transform:scaleX(0.9133);transform-origin:0 50%;">A</span>
<svg style="position:absolute;left:0;top:0;overflow:visible" width="1920" height="300" viewBox="0 0 1920 300"><path d="M686 121.9 L688.9 118.5 L691.8 121.9" fill="none" stroke="#2b88d8" stroke-width="1.6" stroke-linecap="round" stroke-linejoin="round"/></svg>
<span style="position:absolute;left:707.30px;top:118.00px;font-size:17px;line-height:19px;white-space:pre;color:#444;transform:scaleX(0.9250);transform-origin:0 50%;">A</span>
<svg style="position:absolute;left:0;top:0;overflow:visible" width="1920" height="300" viewBox="0 0 1920 300"><path d="M718 118.5 L720.9 121.8 L723.8 118.5" fill="none" stroke="#2b88d8" stroke-width="1.6" stroke-linecap="round" stroke-linejoin="round"/></svg>
<span style="position:absolute;left:739.20px;top:113.00px;font-size:22.5px;line-height:25px;white-space:pre;color:#444;transform:scaleX(0.7733);transform-origin:0 50%;">A</span>
<svg style="position:absolute;left:0;top:0;overflow:visible" width="1920" height="300" viewBox="0 0 1920 300"><g transform="translate(752.9,130.7) rotate(-40)"><rect x="-5.3" y="-3" width="10.6" height="6" fill="#fff" stroke="#8e3fb0" stroke-width="1.4"/><rect x="-5.3" y="-3" width="3.6" height="6" fill="#c9a0dc" stroke="#8e3fb0" stroke-width="1.2"/></g></svg>
<svg style="position:absolute;left:0;top:0;overflow:visible" width="1920" height="300" viewBox="0 0 1920 300"><g transform="translate(676.6,166.6) rotate(-39.5)"><path d="M0.2 -2.3 L-3.2 -1.7 L-7.4 2.5 L-2.6 2.5 L0.2 2.3Z" fill="#767676"/><rect x="0" y="-2.6" width="13.2" height="5.2" rx="2" fill="#fff" stroke="#444" stroke-width="1.2"/></g></svg>
<svg style="position:absolute;left:0;top:0;overflow:visible" width="1920" height="300" viewBox="0 0 1920 300"><path d="M563 172.9 H571 M573.2 172.9 H581" fill="none" stroke="#2b88d8" stroke-width="1.4" /><path d="M565.8 170.2 L563 172.9 L565.8 175.6 M578.2 170.2 L581 172.9 L578.2 175.6" fill="none" stroke="#2b88d8" stroke-width="1.4" stroke-linecap="round" stroke-linejoin="round"/></svg>
<svg style="position:absolute;left:0;top:0;overflow:visible" width="1920" height="300" viewBox="0 0 1920 300"><rect x="789.2" y="117.0" width="3.8" height="3.8" fill="#1e88d6"/><rect x="789.2" y="124.39999999999999" width="3.8" height="3.8" fill="#1e88d6"/><rect x="789.2" y="132.1" width="3.8" height="3.8" fill="#1e88d6"/><path d="M795.1 118.9 H807.8 M795.1 126.3 H807.8 M795.1 134 H807.8" fill="none" stroke="#6a6a6a" stroke-width="1.5" /></svg>
<svg style="position:absolute;left:818.45px;top:124.80px;overflow:visible" width="7.8999999999999995" height="5.2"><path d="M1 1 L3.95 4.20 L6.90 1" fill="none" stroke="#2b2b2b" stroke-width="1.5" stroke-linecap="round" stroke-linejoin="round"/></svg>
<svg style="position:absolute;left:0;top:0;overflow:visible" width="1920" height="300" viewBox="0 0 1920 300"><path d="M846.2 118.9 H858.8 M846.2 126.3 H858.8 M846.2 134 H858.8" fill="none" stroke="#6a6a6a" stroke-width="1.5" /><text x="841.7" y="121.8" text-anchor="middle" font-family="Liberation Sans, sans-serif" font-weight="700" font-size="6.6" fill="#1e88d6">1</text><text x="841.7" y="129.2" text-anchor="middle" font-family="Liberation Sans, sans-serif" font-weight="700" font-size="6.6" fill="#1e88d6">2</text><text x="841.7" y="136.9" text-anchor="middle" font-family="Liberation Sans, sans-serif" font-weight="700" font-size="6.6" fill="#1e88d6">3</text></svg>
<svg style="position:absolute;left:869.45px;top:124.80px;overflow:visible" width="7.8999999999999995" height="5.2"><path d="M1 1 L3.95 4.20 L6.90 1" fill="none" stroke="#2b2b2b" stroke-width="1.5" stroke-linecap="round" stroke-linejoin="round"/></svg>
<svg style="position:absolute;left:0;top:0;overflow:visible" width="1920" height="300" viewBox="0 0 1920 300"><path d="M892 118.9 H909.8 M892 134 H909.8" fill="none" stroke="#b8b8b8" stroke-width="1.5" /><path d="M902.4 124 H909.8 M902.4 128.9 H909.8" fill="none" stroke="#b8b8b8" stroke-width="1.5" /><path d="M892.6 126.3 H899.6 M895.4 123.5 L892.6 126.3 L895.4 129.1" fill="none" stroke="#b8b8b8" stroke-width="1.3" stroke-linecap="round" stroke-linejoin="round"/></svg>
<svg style="position:absolute;left:0;top:0;overflow:visible" width="1920" height="300" viewBox="0 0 1920 300"><path d="M924.1 118.9 H941.9 M924.1 134 H941.9" fill="none" stroke="#b8b8b8" stroke-width="1.5" /><path d="M934.1 124 H941.9 M934.1 128.9 H941.9" fill="none" stroke="#b8b8b8" stroke-width="1.5" /><path d="M924.3 126.3 H931.4 M928.6 123.5 L931.4 126.3 L928.6 129.1" fill="none" stroke="#b8b8b8" stroke-width="1.3" stroke-linecap="round" stroke-linejoin="round"/></svg>
<svg style="position:absolute;left:0;top:0;overflow:visible" width="1920" height="300" viewBox="0 0 1920 300"><path d="M963.7 118.9 H974.8 M963.7 123.8 H974.8 M963.7 128.9 H974.8 M963.7 134 H974.8" fill="none" stroke="#6a6a6a" stroke-width="1.5" /><path d="M958 119 V125.8 M955 121.8 L958 118.7 L961 121.8 M958 128 V135 M955 132.2 L958 135.3 L961 132.2" fill="none" stroke="#2b88d8" stroke-width="1.5" stroke-linecap="round" stroke-linejoin="round"/></svg>
<svg style="position:absolute;left:982.35px;top:124.80px;overflow:visible" width="7.8999999999999995" height="5.2"><path d="M1 1 L3.95 4.20 L6.90 1" fill="none" stroke="#2b2b2b" stroke-width="1.5" stroke-linecap="round" stroke-linejoin="round"/></svg>
<svg style="position:absolute;left:0;top:0;overflow:visible" width="1920" height="300" viewBox="0 0 1920 300"><path d="M790.1 158.8 H807.8 M790.1 168.9 H807.8" fill="none" stroke="#6a6a6a" stroke-width="1.5" /><path d="M790.1 163.8 H802.7 M790.1 173.9 H802.7" fill="none" stroke="#6a6a6a" stroke-width="1.5" /></svg>
<svg style="position:absolute;left:0;top:0;overflow:visible" width="1920" height="300" viewBox="0 0 1920 300"><path d="M822 158.8 H839.8 M822 168.9 H839.8" fill="none" stroke="#6a6a6a" stroke-width="1.5" /><path d="M824.7 163.8 H837.1 M824.7 173.9 H837.1" fill="none" stroke="#6a6a6a" stroke-width="1.5" /></svg>
<svg style="position:absolute;left:0;top:0;overflow:visible" width="1920" height="300" viewBox="0 0 1920 300"><path d="M854.1 158.8 H871.9 M854.1 168.9 H871.9" fill="none" stroke="#6a6a6a" stroke-width="1.5" /><path d="M859.3 163.8 H871.9 M859.3 173.9 H871.9" fill="none" stroke="#6a6a6a" stroke-width="1.5" /></svg>
<svg style="position:absolute;left:0;top:0;overflow:visible" width="1920" height="300" viewBox="0 0 1920 300"><path d="M886 158.8 H904 M886 163.8 H904 M886 168.9 H904 M886 173.9 H904" fill="none" stroke="#6a6a6a" stroke-width="1.5" /></svg>
<svg style="position:absolute;left:0;top:0;overflow:visible" width="1920" height="300" viewBox="0 0 1920 300"><path d="M922.1 163 H928.7 M922.1 166.5 H928.7 M922.1 170.2 H928.7" fill="none" stroke="#2b8fdc" stroke-width="1.7" /><path d="M931.3 163 H937.9 M931.3 166.5 H937.9 M931.3 170.2 H937.9" fill="none" stroke="#2b8fdc" stroke-width="1.7" /></svg>
<svg style="position:absolute;left:947.35px;top:164.90px;overflow:visible" width="7.8999999999999995" height="5.2"><path d="M1 1 L3.95 4.20 L6.90 1" fill="none" stroke="#2b2b2b" stroke-width="1.5" stroke-linecap="round" stroke-linejoin="round"/></svg>
<svg style="position:absolute;left:0;top:0;overflow:visible" width="1920" height="300" viewBox="0 0 1920 300"><path d="M1012.4 107.2 V126 M1009.2 122.8 L1012.4 126.2 L1015.6 122.8" fill="none" stroke="#3d3d3d" stroke-width="1.3" stroke-linecap="round" stroke-linejoin="round"/><path d="M1021.5 117.6 V126 M1018.5 123 L1021.5 126.2 L1024.5 123" fill="none" stroke="#3d3d3d" stroke-width="1.3" stroke-linecap="round" stroke-linejoin="round"/><text x="1021.7" y="116.7" text-anchor="middle" font-family="Liberation Sans, sans-serif" font-size="12.6" fill="#2b88d8" stroke="#2b88d8" stroke-width="0.3">A</text></svg>
<svg style="position:absolute;left:1034.35px;top:114.90px;overflow:visible" width="7.8999999999999995" height="5.2"><path d="M1 1 L3.95 4.20 L6.90 1" fill="none" stroke="#2b2b2b" stroke-width="1.5" stroke-linecap="round" stroke-linejoin="round"/></svg>
<svg style="position:absolute;left:0;top:0;overflow:visible" width="1920" height="300" viewBox="0 0 1920 300"><path d="M1010.8 142.8 H1007.9 V153.8 H1010.8 M1023.2 142.8 H1026.2 V153.8 H1023.2" fill="none" stroke="#3d3d3d" stroke-width="1.3" /><path d="M1012.4 148.3 H1021.7" fill="none" stroke="#7a7a7a" stroke-width="1.3" /><path d="M1016.7 139.4 V146 M1013.9 142 L1016.7 139.2 L1019.5 142 M1016.7 150.6 V157 M1013.9 154.3 L1016.7 157.1 L1019.5 154.3" fill="none" stroke="#2b88d8" stroke-width="1.4" stroke-linecap="round" stroke-linejoin="round"/></svg>
<svg style="position:absolute;left:1034.35px;top:146.90px;overflow:visible" width="7.8999999999999995" height="5.2"><path d="M1 1 L3.95 4.20 L6.90 1" fill="none" stroke="#2b2b2b" stroke-width="1.5" stroke-linecap="round" stroke-linejoin="round"/></svg>
<svg style="position:absolute;left:0;top:0;overflow:visible" width="1920" height="300" viewBox="0 0 1920 300"><path d="M1007.6 173.7 H1019.8 L1025 177.5 L1021.5 182.4 H1007.6 L1011.8 178 Z" fill="#bfe3cb" stroke="#3aa565" stroke-width="1.2" stroke-linejoin="round"/><rect x="1015.2" y="180.1" width="11.4" height="7.2" fill="#f3f3f3" stroke="#484848" stroke-width="1.3"/><path d="M1017.6 182.6 H1018.6 M1020 182.6 H1024.4 M1017.6 184.8 H1018.6 M1020 184.8 H1024.4" fill="none" stroke="#555" stroke-width="1" /></svg>
<svg style="position:absolute;left:1034.35px;top:178.90px;overflow:visible" width="7.8999999999999995" height="5.2"><path d="M1 1 L3.95 4.20 L6.90 1" fill="none" stroke="#2b2b2b" stroke-width="1.5" stroke-linecap="round" stroke-linejoin="round"/></svg>
<svg style="position:absolute;left:0;top:0;overflow:visible" width="1920" height="300" viewBox="0 0 1920 300"><rect x="1079.8" y="120.6" width="14.6" height="12.6" fill="#fff" stroke="#6e6e6e" stroke-width="1.5"/><rect x="1077.6999999999998" y="118.5" width="3.8" height="3.8" fill="#2b88d8"/><rect x="1077.6999999999998" y="131.5" width="3.8" height="3.8" fill="#2b88d8"/><rect x="1092.6999999999998" y="118.5" width="3.8" height="3.8" fill="#2b88d8"/><rect x="1092.6999999999998" y="131.5" width="3.8" height="3.8" fill="#2b88d8"/><text x="1087.1" y="130.8" text-anchor="middle" font-family="Liberation Sans, sans-serif" font-size="11.2" fill="#2b88d8" stroke="#2b88d8" stroke-width="0.45">A</text><path d="M1101.4 117.3 L1120.6 136.2" fill="none" stroke="#454545" stroke-width="1.2" stroke-linejoin="round"/><path d="M1125.4 117.3 L1144.4 136 M1140.2 136.2 H1144.6 V131.9" fill="none" stroke="#454545" stroke-width="1.2" stroke-linejoin="round"/><path d="M1149.9 120.5 H1167.8 V133.3 H1149.9 Z" fill="#f6f6f6" stroke="#454545" stroke-width="1.2" stroke-linejoin="round"/><ellipse cx="1183" cy="126.9" rx="9.2" ry="6.5" fill="#f6f6f6" stroke="#454545" stroke-width="1.2"/><rect x="1198.1" y="120.5" width="18" height="12.8" rx="3.2" fill="#f6f6f6" stroke="#454545" stroke-width="1.2"/><path d="M1087 142.8 L1096 159.8 H1078.2 Z" fill="#f6f6f6" stroke="#454545" stroke-width="1.2" stroke-linejoin="round"/><path d="M1101.4 142.8 H1110.8 V158.8 H1120.6" fill="none" stroke="#454545" stroke-width="1.2" /><path d="M1125.4 143.5 H1134 V157.8 H1144.2 M1141.4 155 L1144.4 157.8 L1141.4 160.6" fill="none" stroke="#454545" stroke-width="1.2" /><path d="M1149.9 146.8 H1159.5 V143.6 L1167.8 150.8 L1159.5 158 V154.9 H1149.9 Z" fill="#f6f6f6" stroke="#454545" stroke-width="1.2" stroke-linejoin="round"/><path d="M1178.6 142.2 H1187.4 V152.4 H1190.6 L1183 159.9 L1175.4 152.4 H1178.6 Z" fill="#f6f6f6" stroke="#454545" stroke-width="1.2" stroke-linejoin="round"/><path d="M1198.1 147 L1201.8 143.4 H1211.6 A4.4 4.4 0 0 0 1216 151 V155.6 A3 3 0 0 1 1213 158.6 H1201 A2.9 2.9 0 0 1 1198.1 155.7 Z" fill="#f6f6f6" stroke="#454545" stroke-width="1.2" stroke-linejoin="round"/><path d="M1078.8 165.4 C1077.6 172 1080 177 1086 175.2 C1091 173.6 1096 169.4 1093.6 167.4 C1091.4 165.8 1083 170.6 1083 176.2 C1083 182.6 1092.4 176.6 1095.6 179.2 C1097.6 181 1094.6 183.4 1092.6 184.3" fill="none" stroke="#454545" stroke-width="1.2" stroke-linejoin="round"/><path d="M1101.4 166.8 C1113 167.8 1120.2 173 1120.6 183.7" fill="none" stroke="#454545" stroke-width="1.2" stroke-linejoin="round"/><path d="M1125.4 172.8 C1127.6 168.4 1130.6 165.6 1133.4 167 C1138 169.4 1138.6 180 1144.6 182.4" fill="none" stroke="#454545" stroke-width="1.2" stroke-linejoin="round"/><path d="M1161.6 165.6 C1159 165.6 1158.4 166.4 1158.4 168.4 V172 C1158.4 174 1157.6 174.9 1155.6 174.9 C1157.6 174.9 1158.4 176 1158.4 178 V181.6 C1158.4 183.6 1159 184.4 1161.6 184.4" fill="none" stroke="#454545" stroke-width="1.2" stroke-linejoin="round"/><path d="M1180.8 165.6 C1183.4 165.6 1184 166.4 1184 168.4 V172 C1184 174 1184.8 174.9 1186.8 174.9 C1184.8 174.9 1184 176 1184 178 V181.6 C1184 183.6 1183.4 184.4 1180.8 184.4" fill="none" stroke="#454545" stroke-width="1.2" stroke-linejoin="round"/><path d="M1207 166 L1209.3 173 H1216.4 L1210.7 177.4 L1212.9 184.3 L1207 180 L1201.1 184.3 L1203.3 177.4 L1197.6 173 H1204.7 Z" fill="#f6f6f6" stroke="#454545" stroke-width="1.2" stroke-linejoin="miter"/></svg>
<svg style="position:absolute;left:1225.75px;top:125.35px;overflow:visible" width="7.699999999999999" height="4.9"><path d="M1 1 L3.85 -1.90 L6.70 1" fill="none" stroke="#b0b0b0" stroke-width="1.3" stroke-linecap="round" stroke-linejoin="round"/></svg>
<svg style="position:absolute;left:1225.75px;top:148.00px;overflow:visible" width="7.699999999999999" height="5.0"><path d="M1 1 L3.85 4.00 L6.70 1" fill="none" stroke="#2b2b2b" stroke-width="1.5" stroke-linecap="round" stroke-linejoin="round"/></svg>
<svg style="position:absolute;left:0;top:0;overflow:visible" width="1920" height="300" viewBox="0 0 1920 300"><path d="M1225.4 171.3 H1233.8" fill="none" stroke="#2b2b2b" stroke-width="1.3" /></svg>
<svg style="position:absolute;left:1225.75px;top:174.35px;overflow:visible" width="7.699999999999999" height="4.9"><path d="M1 1 L3.85 3.90 L6.70 1" fill="none" stroke="#2b2b2b" stroke-width="1.4" stroke-linecap="round" stroke-linejoin="round"/></svg>
<svg style="position:absolute;left:0;top:0;overflow:visible" width="1920" height="300" viewBox="0 0 1920 300"><rect x="1262.3" y="114.5" width="23.5" height="23" fill="#f9dc8f" stroke="#e8912d" stroke-width="1.6"/><rect x="1257" y="109.2" width="13.9" height="13.5" fill="#fafafa" stroke="#6e6e6e" stroke-width="1.5"/><rect x="1277" y="129.2" width="13.9" height="13.5" fill="#fafafa" stroke="#6e6e6e" stroke-width="1.5"/></svg>
<svg style="position:absolute;left:0;top:0;overflow:visible" width="1920" height="300" viewBox="0 0 1920 300"><rect x="1316.4" y="109.3" width="33.4" height="33.6" rx="2.6" fill="#fafafa" stroke="#5a5a5a" stroke-width="1.5"/><path d="M1321 139 H1341 V146 H1321 Z M1346 119.4 H1354 V132 H1346 Z" fill="#fff"/><path d="M1322 142.6 L1320 141.2 M1340.8 142.9 H1344" stroke="#fafafa" stroke-width="0"/><path d="M1336 137.2 C1342 130.6 1349.6 122.6 1352 121.2 C1353.4 122.2 1347 131.4 1339.2 139.6 Z" fill="#fff" stroke="#444" stroke-width="1.2" stroke-linejoin="round"/><path d="M1324.6 142.6 C1328.4 142 1329.6 139.4 1331.6 137.2 C1333.8 134.8 1338.2 136.4 1338.8 139.6 C1339.4 143.6 1334 146.4 1330.4 145.6 C1327.8 145.2 1325.8 144.2 1324.6 142.6 Z" fill="#86bdea" stroke="#2079cf" stroke-width="1.2" stroke-linejoin="round"/></svg>
<svg style="position:absolute;left:0;top:0;overflow:visible" width="1920" height="300" viewBox="0 0 1920 300"><path d="M1372.6 115.4 L1379.2 109.6 L1384.6 114.6 L1378.2 120.8 Z" fill="#fff" stroke="#3d3d3d" stroke-width="1.2" stroke-linejoin="round"/><path d="M1378.4 111.2 V108.6 A1.3 1.3 0 0 1 1381 108.6 V112.8" fill="none" stroke="#3d3d3d" stroke-width="1.1"/><path d="M1383.4 111.6 C1386.4 112 1387.2 115.6 1386.8 119.4 C1385.6 116.4 1384.6 115 1383.2 114.2 Z" fill="#1e6fc0" stroke="#1e6fc0" stroke-width="0.6"/><rect x="1369.2" y="122.2" width="19.7" height="4.7" fill="#c4553f"/></svg>
<svg style="position:absolute;left:0;top:0;overflow:visible" width="1920" height="300" viewBox="0 0 1920 300"><path d="M1381 141.2 H1370.8 V151.8 H1374.4" fill="none" stroke="#6e6e6e" stroke-width="1.4"/><g transform="translate(1375.8,152) rotate(-43)"><path d="M0 0 L4 -2.1 H15.4 A2.1 2.1 0 0 1 15.4 2.1 H4 Z" fill="#fff" stroke="#2b88d8" stroke-width="1.2" stroke-linejoin="round"/><path d="M0 0 L3.2 -1.6 V1.6 Z" fill="#2b88d8"/><path d="M13 -2.1 V2.1" stroke="#2b88d8" stroke-width="1"/></g><rect x="1369.2" y="154.2" width="19.7" height="4.7" fill="#4a7fc7"/></svg>
<svg style="position:absolute;left:0;top:0;overflow:visible" width="1920" height="300" viewBox="0 0 1920 300"><path d="M1374.6 174 H1384.6 L1388.2 177.6 L1384 185.2 L1383.6 188 H1373.4 L1369.8 184.2 Z" fill="#f4f4f4" stroke="#3d3d3d" stroke-width="1.2" stroke-linejoin="round"/><path d="M1369.9 184.2 H1380.2 L1383.7 187.9 H1373.4 Z" fill="#777" stroke="#3d3d3d" stroke-width="1"/><path d="M1380.2 184.2 L1384.6 174.2 L1388.2 177.6 L1383.7 187.9 Z" fill="#d2d2d2" stroke="#3d3d3d" stroke-width="1"/><path d="M1380.8 183.8 L1384.2 176.4 L1386.6 178.4 L1383.4 186.4 Z" fill="#fff"/></svg>
<svg style="position:absolute;left:0;top:0;overflow:visible" width="1920" height="300" viewBox="0 0 1920 300"><circle cx="1546" cy="113.9" r="6.2" fill="#fafafa" stroke="#444" stroke-width="1.3"/><path d="M1541.5 118.6 L1534 126" fill="none" stroke="#444" stroke-width="1.5" stroke-linecap="round"/></svg>
<svg style="position:absolute;left:0;top:0;overflow:visible" width="1920" height="300" viewBox="0 0 1920 300"><text x="1540.1" y="148.6" font-family="Liberation Sans, sans-serif" font-size="12.6" fill="#b14fc5" stroke="#b14fc5" stroke-width="0.3">b</text><text x="1545" y="158.5" font-family="Liberation Sans, sans-serif" font-size="12.6" fill="#1e88d6" stroke="#1e88d6" stroke-width="0.3">c</text><path d="M1537 145.9 C1533 147.6 1533 153.2 1537.4 154.5 H1542.4 M1539.6 151.5 L1542.7 154.5 L1539.6 157.8" fill="none" stroke="#1e88d6" stroke-width="1.4" stroke-linecap="round" stroke-linejoin="round"/></svg>
<svg style="position:absolute;left:0;top:0;overflow:visible" width="1920" height="300" viewBox="0 0 1920 300"><path d="M1535.9 172.4 V188.6 L1539.7 185.6 L1542 190 L1544.4 188.8 L1542.3 184.6 H1547.6 Z" fill="#fafafa" stroke="#444" stroke-width="1.3" stroke-linejoin="miter"/></svg>
<svg style="position:absolute;left:0;top:0;overflow:visible" width="1920" height="300" viewBox="0 0 1920 300"><rect x="1681.1" y="107.9" width="13.6" height="25.5" rx="6.8" fill="#83bce9" stroke="#1e6fc0" stroke-width="1.4"/><path d="M1676.9 126.2 V126.8 A11 11 0 0 0 1698.9 126.8 V126.2" fill="none" stroke="#444" stroke-width="1.5" stroke-linecap="round"/><path d="M1687.9 138 V144.5" fill="none" stroke="#444" stroke-width="1.9" /></svg>
<svg style="position:absolute;left:0;top:0;overflow:visible" width="1920" height="300" viewBox="0 0 1920 300"><rect x="1749.8" y="112.8" width="34.19999999999986" height="26.299999999999986" fill="#cdcdcd" stroke="#6e6e6e" stroke-width="1.2"/><rect x="1752.4" y="115.4" width="28.999999999999865" height="21.099999999999987" fill="#fafafa" stroke="#6e6e6e" stroke-width="1.1"/><path d="M1752.4 121.3 H1781.4 M1774.2 121.3 V136.4" fill="none" stroke="#6e6e6e" stroke-width="1.2" /><path d="M1752.6 104.4 H1765.6 L1761.6 113.4 H1765.8 L1747 133.6 L1744.6 132 L1749.4 121.4 H1744.8 Z" fill="#fff"/><path d="M1754.3 106.3 H1762.7 L1757.8 115.3 H1762.3 L1747.7 130.6 L1752.2 119.7 H1747.5 Z" fill="#f9dc8f" stroke="#e07b1a" stroke-width="1.3" stroke-linejoin="miter"/></svg>
<svg style="position:absolute;left:0;top:230px;overflow:visible" width="1920" height="30" viewBox="0 230 1920 30"><rect x="20.6" y="236.4" width="16.2" height="10.2" fill="#fafafa" stroke="#4a4a4a" stroke-width="1.2"/><path d="M19.8 235.6 H37.6" fill="none" stroke="#4a4a4a" stroke-width="1.6" /><path d="M28.7 246.8 V252.4 M22.6 252.6 H34.4" fill="none" stroke="#4a4a4a" stroke-width="1.3" /><path d="M26 237.9 L31.4 240.9 L26 243.9 Z" fill="#2e9f57"/></svg>
<svg style="position:absolute;left:0;top:230px;overflow:visible" width="1920" height="30" viewBox="0 230 1920 30"><rect x="167.7" y="236.4" width="13" height="7.8" fill="#fafafa" stroke="#4a4a4a" stroke-width="1.2"/><path d="M167.1 235.8 H181.3" fill="none" stroke="#4a4a4a" stroke-width="1.5" /><rect x="168" y="240" width="7" height="13" fill="#f9f9f9"/><rect x="175.6" y="245.8" width="10.6" height="7.6" fill="#fafafa" stroke="#4a4a4a" stroke-width="1.2"/><path d="M175 245.2 H186.8" fill="none" stroke="#4a4a4a" stroke-width="1.5" /><path d="M171.6 241.4 C168.2 243.6 168.2 248.6 172.4 250.6 H175 M172.4 247.8 L175.4 250.7 L172.4 253.6" fill="none" stroke="#2b88d8" stroke-width="1.4" stroke-linecap="round" stroke-linejoin="round"/></svg>
<svg style="position:absolute;left:0;top:230px;overflow:visible" width="1920" height="30" viewBox="0 230 1920 30"><path d="M335 240.4 H344.1" fill="none" stroke="#333" stroke-width="1.3" /></svg>
<svg style="position:absolute;left:335.65px;top:242.95px;overflow:visible" width="7.8999999999999995" height="5.1"><path d="M1 1 L3.95 4.10 L6.90 1" fill="none" stroke="#333" stroke-width="1.3" stroke-linecap="round" stroke-linejoin="round"/></svg>
<svg style="position:absolute;left:0;top:1113px;overflow:visible" width="1920" height="26" viewBox="0 1113 1920 26"><circle cx="275.8" cy="1120.7" r="2" fill="none" stroke="#3b3b3b" stroke-width="1.1"/><path d="M268.6 1121.6 C271 1120.8 272.6 1124 275.8 1124 C279 1124 280.8 1120.8 283.2 1121.6 C284.4 1122.4 282.2 1124.4 279.4 1125.6 L278.6 1128.2 M272.6 1125.4 C270.4 1124.4 267.8 1122.6 268.6 1121.6 M272.6 1125.4 C273.4 1129 272.2 1132.6 271 1134.6 C271.6 1135.6 272.8 1135.4 273.4 1134.4 L275.2 1130.4 L276.6 1132.4" fill="none" stroke="#3b3b3b" stroke-width="1.1" stroke-linecap="round" stroke-linejoin="round"/><path d="M278.4 1127.8 L285.6 1135.2 M285.6 1127.8 L278.4 1135.2" fill="none" stroke="#3b3b3b" stroke-width="1.1" /></svg>
<svg style="position:absolute;left:0;top:1113px;overflow:visible" width="1920" height="26" viewBox="0 1113 1920 26"><path d="M1394.2 1126.7 H1413.9 M1394.2 1131.4 H1413.9 M1394.2 1136.2 H1413.9" fill="none" stroke="#444" stroke-width="1.2" /><path d="M1400.8 1122.2 L1404.2 1118.6 L1407.6 1122.2" fill="none" stroke="#444" stroke-width="1.3" stroke-linecap="round" stroke-linejoin="round"/></svg>
<svg style="position:absolute;left:0;top:1113px;overflow:visible" width="1920" height="26" viewBox="0 1113 1920 26"><rect x="1491.8" y="1120.2" width="16.5" height="13.6" fill="none" stroke="#444" stroke-width="1.3"/><path d="M1495.2 1120.2 V1133.8 M1495.2 1130.9 H1508.3" fill="none" stroke="#444" stroke-width="1.3" /><rect x="1499.4" y="1124" width="5.4" height="2.8" fill="none" stroke="#444" stroke-width="1.1"/></svg>
<svg style="position:absolute;left:0;top:1113px;overflow:visible" width="1920" height="26" viewBox="0 1113 1920 26"><rect x="1542.1" y="1120.9" width="5.6" height="3.9" fill="none" stroke="#444" stroke-width="1.3"/><rect x="1542.1" y="1129.7" width="5.6" height="3.9" fill="none" stroke="#444" stroke-width="1.3"/><rect x="1552.5" y="1120.9" width="5.6" height="3.9" fill="none" stroke="#444" stroke-width="1.3"/><rect x="1552.5" y="1129.7" width="5.6" height="3.9" fill="none" stroke="#444" stroke-width="1.3"/></svg>
<svg style="position:absolute;left:0;top:1113px;overflow:visible" width="1920" height="26" viewBox="0 1113 1920 26"><path d="M1599.5 1120.6 C1597.6 1119 1594.6 1118.8 1592.2 1119.4 V1132.4 C1594.6 1131.8 1597.6 1132.2 1599.5 1133.8 C1601.4 1132.2 1604.4 1131.8 1606.8 1132.4 V1119.4 C1604.4 1118.8 1601.4 1119 1599.5 1120.6 Z M1599.5 1120.6 V1133.8" fill="none" stroke="#444" stroke-width="1.2" stroke-linejoin="round"/><path d="M1594 1122.4 H1597.6 M1594 1124.6 H1597.6 M1594 1126.8 H1597.6 M1594 1129 H1597.6 M1601.4 1122.4 H1605 M1601.4 1124.6 H1605 M1601.4 1126.8 H1605 M1601.4 1129 H1605" fill="none" stroke="#444" stroke-width="1" /></svg>
<svg style="position:absolute;left:0;top:1113px;overflow:visible" width="1920" height="26" viewBox="0 1113 1920 26"><rect x="1643.2" y="1119.4" width="12.6" height="8.2" fill="none" stroke="#444" stroke-width="1.2"/><path d="M1641.9 1118.9 H1657" fill="none" stroke="#444" stroke-width="1.5" /><path d="M1646.6 1122.6 H1652.2" fill="none" stroke="#444" stroke-width="1.1" /><path d="M1649.5 1127.8 V1133.6 M1645.2 1133.9 H1653.6" fill="none" stroke="#444" stroke-width="1.3" /></svg>
<svg style="position:absolute;left:0;top:1113px;overflow:visible" width="1920" height="26" viewBox="0 1113 1920 26"><path d="M1682 1126.4 H1691.5" fill="none" stroke="#444" stroke-width="1.2" /><path d="M1698 1127.5 H1823" fill="none" stroke="#6a6a6a" stroke-width="1" /><rect x="1749" y="1120.1" width="5.9" height="13.8" fill="#666"/><path d="M1760.5 1124 V1131" fill="none" stroke="#6a6a6a" stroke-width="1" /><path d="M1828.9 1126.5 H1838.4 M1833.6 1121.8 V1131.3" fill="none" stroke="#444" stroke-width="1.2" /></svg>
<svg style="position:absolute;left:0;top:1113px;overflow:visible" width="1920" height="26" viewBox="0 1113 1920 26"><rect x="1901.4" y="1124" width="6" height="5.8" fill="none" stroke="#444" stroke-width="1.3"/><path d="M1902.3 1122 L1904.4 1120.4 L1906.5 1122 M1902.3 1132.9 L1904.4 1134.6 L1906.5 1132.9 M1897.6 1124.4 L1895.7 1126.7 L1897.6 1129 M1910.8 1124.4 L1912.7 1126.7 L1910.8 1129" fill="none" stroke="#444" stroke-width="1.1" stroke-linecap="round" stroke-linejoin="round"/></svg>
<svg style="position:absolute;left:0;top:260px;overflow:visible" width="1920" height="800" viewBox="0 260 1920 800"><path d="M1909.5 271.6 L1914.4 277.9 L1904.6 277.9 Z" fill="#727272" stroke="#727272" stroke-width="1.4" stroke-linejoin="round"/><path d="M1909.5 991.8 L1914.4 985.4 L1904.6 985.4 Z" fill="#727272" stroke="#727272" stroke-width="1.4" stroke-linejoin="round"/><path d="M1909.5 1002 L1914.6 1008.2 L1904.4 1008.2 Z" fill="#727272" stroke="#727272" stroke-width="1.4" stroke-linejoin="round"/><path d="M1909.5 1008.6 L1914.6 1014.8 L1904.4 1014.8 Z" fill="#727272" stroke="#727272" stroke-width="1.4" stroke-linejoin="round"/><path d="M1909.5 1036.4 L1914.6 1030 L1904.4 1030 Z" fill="#727272" stroke="#727272" stroke-width="1.4" stroke-linejoin="round"/><path d="M1909.5 1029.6 L1914.6 1023.2 L1904.4 1023.2 Z" fill="#727272" stroke="#727272" stroke-width="1.4" stroke-linejoin="round"/></svg>
<svg style="position:absolute;left:0;top:0;overflow:visible" width="1920" height="300" viewBox="0 0 1920 300"><path d="M202.7 205.5 H194.6 V213.6" fill="none" stroke="#262626" stroke-width="1.15" stroke-linecap="round" stroke-linejoin="round"/><path d="M198.0 209.2 L203.29999999999998 214.3 M198.0 214.5 H203.5 V209.2" fill="none" stroke="#262626" stroke-width="1.15" stroke-linecap="round" stroke-linejoin="round"/></svg>
<svg style="position:absolute;left:0;top:0;overflow:visible" width="1920" height="300" viewBox="0 0 1920 300"><path d="M768.2 205.5 H760.1 V213.6" fill="none" stroke="#262626" stroke-width="1.15" stroke-linecap="round" stroke-linejoin="round"/><path d="M763.5 209.2 L768.8000000000001 214.3 M763.5 214.5 H769.0 V209.2" fill="none" stroke="#262626" stroke-width="1.15" stroke-linecap="round" stroke-linejoin="round"/></svg>
<svg style="position:absolute;left:0;top:0;overflow:visible" width="1920" height="300" viewBox="0 0 1920 300"><path d="M1055.1999999999998 205.5 H1047.1 V213.6" fill="none" stroke="#262626" stroke-width="1.15" stroke-linecap="round" stroke-linejoin="round"/><path d="M1050.5 209.2 L1055.8 214.3 M1050.5 214.5 H1056.0 V209.2" fill="none" stroke="#262626" stroke-width="1.15" stroke-linecap="round" stroke-linejoin="round"/></svg>
<svg style="position:absolute;left:0;top:0;overflow:visible" width="1920" height="300" viewBox="0 0 1920 300"><path d="M1511.6999999999998 205.5 H1503.6 V213.6" fill="none" stroke="#262626" stroke-width="1.15" stroke-linecap="round" stroke-linejoin="round"/><path d="M1507.0 209.2 L1512.3 214.3 M1507.0 214.5 H1512.5 V209.2" fill="none" stroke="#262626" stroke-width="1.15" stroke-linecap="round" stroke-linejoin="round"/></svg>
<svg style="position:absolute;left:0;top:0;overflow:visible" width="1920" height="300" viewBox="0 0 1920 300"><path d="M469.8 173.75 H481.1" fill="none" stroke="#4a4a4a" stroke-width="1.6" /><path d="M530.3 168.6 H550" fill="none" stroke="#4a4a4a" stroke-width="1.2" /></svg>
</div></body></html>
